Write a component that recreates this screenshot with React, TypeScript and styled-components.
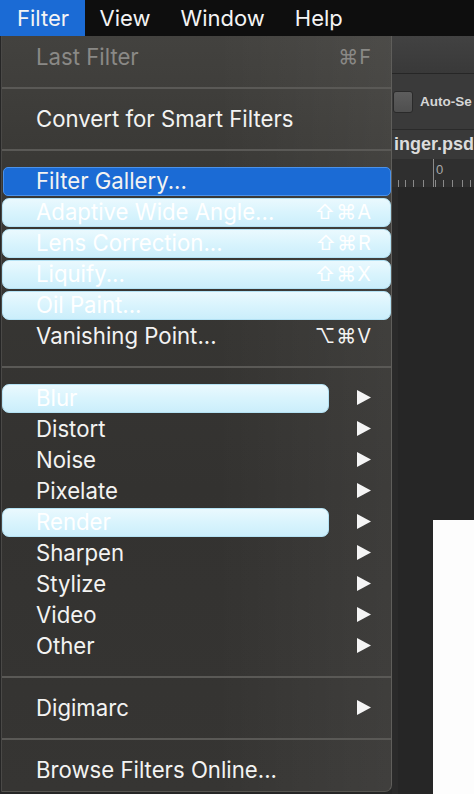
import React from 'react';
import styled, { createGlobalStyle, css } from 'styled-components';

const GlobalStyle = createGlobalStyle`
  html, body {
    margin: 0;
    padding: 0;
    background: #262626;
  }
  body {
    font-family: Inter, "Noto Sans", "DejaVu Sans", sans-serif;
    -webkit-font-smoothing: antialiased;
  }
`;

const Screen = styled.div`
  width: 474px;
  height: 794px;
  display: flex;
  flex-direction: column;
  overflow: hidden;
  background: #262626;
`;

const MenuBar = styled.div`
  height: 36px;
  flex: none;
  display: flex;
  align-items: stretch;
  background: #0e0e0e;
`;

const BarItem = styled.div<{ $active?: boolean }>`
  display: flex;
  align-items: center;
  padding: ${(p) => (p.$active ? '0 15.5px 0 17px' : '0 15px')};
  font-size: 22px;
  color: #f4f4f4;
  white-space: nowrap;
  background: ${(p) => (p.$active ? '#1b6bd5' : 'transparent')};
`;

const Body = styled.div`
  flex: 1;
  display: flex;
  min-height: 0;
`;

const Menu = styled.div`
  width: 389px;
  flex: none;
  margin: 0 0 2px 1px;
  padding-top: 5px;
  border-left: 1px solid #4a4947;
  border-right: 1px solid #5f5e5b;
  border-bottom: 1px solid #55544f;
  border-bottom-right-radius: 7px;
  background:
    linear-gradient(90deg, rgba(255, 255, 255, 0) 55%, rgba(255, 255, 255, 0.05) 100%),
    linear-gradient(180deg, #43423f 0%, #393835 18%, #333230 60%, #363533 100%);
  display: flex;
  flex-direction: column;
`;

type Variant = 'normal' | 'disabled' | 'selected' | 'masked';

const rowBg = {
  selected: css`
    &::before {
      content: '';
      position: absolute;
      top: 2px;
      bottom: 0;
      left: 1px;
      right: 0;
      border-radius: 5px;
      border: 1px solid #4b92ea;
      background: #1b6bd5;
    }
  `,
  masked: css<{ $maskRight: number }>`
    &::before {
      content: '';
      position: absolute;
      top: 2px;
      bottom: 0;
      left: 0;
      right: ${(p) => p.$maskRight}px;
      border-radius: 7px;
      border: 1px solid #b4e2f4;
      background: linear-gradient(180deg, #eaf9fe 0%, #d9f4fd 50%, #cbeefb 100%);
    }
  `,
};

const Row = styled.div<{ $variant: Variant; $maskRight: number }>`
  position: relative;
  height: 31px;
  flex: none;
  display: flex;
  align-items: center;
  padding: 0 19px 0 34px;
  font-size: 22.2px;
  color: ${(p) =>
    p.$variant === 'disabled' ? '#8a8986' : p.$variant === 'masked' ? '#ffffff' : '#f3f3f2'};
  ${(p) => (p.$variant === 'selected' ? rowBg.selected : p.$variant === 'masked' ? rowBg.masked : '')}
`;

const Label = styled.span`
  position: relative;
  flex: 1;
  white-space: nowrap;
`;

const Shortcut = styled.span`
  position: relative;
  font-size: 20px;
  letter-spacing: 1px;
  white-space: nowrap;
`;

const Arrow = styled.svg`
  position: relative;
  width: 15px;
  height: 15px;
  margin-right: 1px;
`;

const Separator = styled.div`
  height: 31px;
  flex: none;
  display: flex;
  align-items: center;
  &::after {
    content: '';
    flex: 1;
    height: 2px;
    background: #5a5956;
  }
`;

const Workspace = styled.div`
  flex: 1;
  display: flex;
  flex-direction: column;
  min-width: 0;
  overflow: hidden;
`;

const AppBar = styled.div`
  height: 37px;
  flex: none;
  background: linear-gradient(180deg, #424242, #393939);
  border-bottom: 1px solid #262626;
`;

const OptionsBar = styled.div`
  height: 55px;
  flex: none;
  display: flex;
  align-items: center;
  gap: 7px;
  padding-left: 1px;
  background: #3a3a3a;
  border-bottom: 1px solid #2a2a2a;
`;

const Checkbox = styled.div`
  width: 18px;
  height: 20px;
  flex: none;
  border-radius: 3px;
  border: 1px solid #2a2a2a;
  background: linear-gradient(180deg, #5d5d5d, #4f4f4f);
`;

const OptionText = styled.span`
  font-family: "Liberation Sans", Arial, sans-serif;
  font-size: 13.5px;
  font-weight: bold;
  color: #d6d6d6;
  white-space: nowrap;
`;

const TabRow = styled.div`
  height: 29px;
  flex: none;
  display: flex;
  align-items: center;
  background: #393939;
  padding-left: 2px;
`;

const TabText = styled.span`
  font-family: "Liberation Sans", Arial, sans-serif;
  font-size: 18px;
  font-weight: bold;
  color: #dcdcdc;
  white-space: nowrap;
`;

const Ruler = styled.svg`
  height: 28px;
  width: 100%;
  flex: none;
  display: block;
  background: #2f2f2f;
`;

const Canvas = styled.div`
  flex: 1;
  display: flex;
  padding: 333px 0 0 35px;
  background: #262626;
  border-left: 6px solid #2a2a2a;
`;

const Doc = styled.div`
  flex: 1;
  background: #fdfdfd;
`;

type Item =
  | { kind: 'sep' }
  | {
      kind: 'item';
      label: string;
      shortcut?: string;
      sub?: boolean;
      variant?: Variant;
    };

const items: Item[] = [
  { kind: 'item', label: 'Last Filter', shortcut: '⌘F', variant: 'disabled' },
  { kind: 'sep' },
  { kind: 'item', label: 'Convert for Smart Filters' },
  { kind: 'sep' },
  { kind: 'item', label: 'Filter Gallery...', variant: 'selected' },
  { kind: 'item', label: 'Adaptive Wide Angle...', shortcut: '⇧⌘A', variant: 'masked' },
  { kind: 'item', label: 'Lens Correction...', shortcut: '⇧⌘R', variant: 'masked' },
  { kind: 'item', label: 'Liquify...', shortcut: '⇧⌘X', variant: 'masked' },
  { kind: 'item', label: 'Oil Paint...', variant: 'masked' },
  { kind: 'item', label: 'Vanishing Point...', shortcut: '⌥⌘V' },
  { kind: 'sep' },
  { kind: 'item', label: 'Blur', sub: true, variant: 'masked' },
  { kind: 'item', label: 'Distort', sub: true },
  { kind: 'item', label: 'Noise', sub: true },
  { kind: 'item', label: 'Pixelate', sub: true },
  { kind: 'item', label: 'Render', sub: true, variant: 'masked' },
  { kind: 'item', label: 'Sharpen', sub: true },
  { kind: 'item', label: 'Stylize', sub: true },
  { kind: 'item', label: 'Video', sub: true },
  { kind: 'item', label: 'Other', sub: true },
  { kind: 'sep' },
  { kind: 'item', label: 'Digimarc', sub: true },
  { kind: 'sep' },
  { kind: 'item', label: 'Browse Filters Online...' },
];

const ticks = [6, 13, 21, 31, 43, 51, 60, 70, 78];

const App: React.FC = () => {
  return (
    <>
      <GlobalStyle />
      <Screen>
        <MenuBar>
          <BarItem $active>Filter</BarItem>
          <BarItem>View</BarItem>
          <BarItem>Window</BarItem>
          <BarItem>Help</BarItem>
        </MenuBar>
        <Body>
          <Menu>
            {items.map((it, i) =>
              it.kind === 'sep' ? (
                <Separator key={i} />
              ) : (
                <Row
                  key={i}
                  $variant={it.variant ?? 'normal'}
                  $maskRight={it.sub ? 62 : 0}
                >
                  <Label>{it.label}</Label>
                  {it.shortcut && <Shortcut>{it.shortcut}</Shortcut>}
                  {it.sub && (
                    <Arrow viewBox="0 0 15 15">
                      <polygon points="1,0 15,7.5 1,15" fill="#f5f5f5" />
                    </Arrow>
                  )}
                </Row>
              )
            )}
          </Menu>
          <Workspace>
            <AppBar />
            <OptionsBar>
              <Checkbox />
              <OptionText>Auto-Se</OptionText>
            </OptionsBar>
            <TabRow>
              <TabText>inger.psd</TabText>
            </TabRow>
            <Ruler viewBox="0 0 82 28" preserveAspectRatio="xMinYMin slice">
              <line x1="41.5" y1="0" x2="41.5" y2="28" stroke="#8a8a8a" strokeWidth="1" />
              {ticks.map((x) => (
                <line key={x} x1={x + 0.5} y1="21" x2={x + 0.5} y2="28" stroke="#8a8a8a" strokeWidth="1" />
              ))}
              <text x="44" y="15" fontSize="13" fill="#a8a8a8" fontFamily="Liberation Sans, sans-serif">
                0
              </text>
            </Ruler>
            <Canvas>
              <Doc />
            </Canvas>
          </Workspace>
        </Body>
      </Screen>
    </>
  );
};

export default App;
